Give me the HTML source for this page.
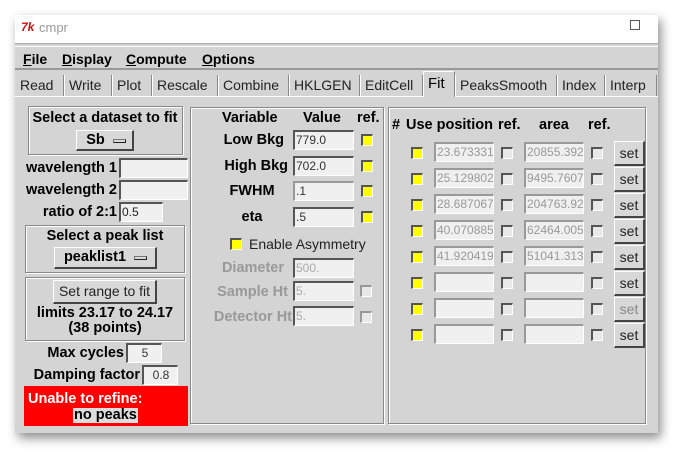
<!DOCTYPE html>
<html><head><meta charset="utf-8"><style>
*{box-sizing:border-box;margin:0;padding:0}
body{width:695px;height:470px;background:#fff;position:relative;overflow:hidden;font-family:"Liberation Sans",sans-serif;font-size:13px;color:#000}
.a{position:absolute}
.win{left:15px;top:15px;width:643px;height:418px;background:#d4d4d4;box-shadow:3px 5px 10px rgba(0,0,0,.45)}
.b{font-weight:bold}
.ent{position:absolute;background:#f0f0f0;border-top:2px solid #555;border-left:2px solid #555;border-right:1px solid #fff;border-bottom:1px solid #fff;height:20px;font-size:12px;color:#555;padding-left:1px;line-height:17px;overflow:hidden;white-space:nowrap}
.ent.g{border-top-color:#999;border-left-color:#999}
.cb{position:absolute;width:12px;height:12px;background:#ffff00;border-top:2px solid #555;border-left:2px solid #555;border-right:1px solid #fff;border-bottom:1px solid #fff}
.cw{position:absolute;width:12px;height:12px;background:#e8e8e8;border-top:2px solid #555;border-left:2px solid #555;border-right:1px solid #fff;border-bottom:1px solid #fff}
.grp{position:absolute;border:1px solid #888;box-shadow:inset 1px 1px 0 #fff,1px 1px 0 #fff}
.btn{position:absolute;background:#d8d8d8;border-top:1px solid #fff;border-left:1px solid #fff;border-right:2px solid #444;border-bottom:2px solid #444;text-align:center}
.tab{position:absolute;top:75px;height:21px;border-left:1px solid #fff;border-right:1px solid #888;font-size:14px;line-height:20px;padding-left:4px;color:#222}
.r{text-align:right}
.gr{color:#999}
.L{font-size:14.5px}
</style></head><body>
<div class="a win"></div>
<div class="a" style="left:15px;top:15px;width:643px;height:29px;background:#fff;border-bottom:1px solid #aaa"></div>
<div class="a" style="left:21px;top:20px;color:#d01010;font-weight:bold;font-style:italic;font-size:12px">7k</div>
<div class="a" style="left:39px;top:20px;color:#999;font-size:13px">cmpr</div>
<div class="a" style="left:630px;top:20px;width:10px;height:10px;border:1px solid #555"></div>
<div class="a" style="left:15px;top:46px;width:643px;height:24px;border-bottom:2px solid #999;box-shadow:inset 0 1px 0 #fff"></div>
<div class="a b" style="left:23px;top:51px;font-size:14px"><u>F</u>ile</div>
<div class="a b" style="left:62px;top:51px;font-size:14px"><u>D</u>isplay</div>
<div class="a b" style="left:126px;top:51px;font-size:14px"><u>C</u>ompute</div>
<div class="a b" style="left:202px;top:51px;font-size:14px"><u>O</u>ptions</div>
<div class="tab" style="left:16px;width:48px;border-left:none">Read</div>
<div class="tab" style="left:64px;width:48px">Write</div>
<div class="tab" style="left:112px;width:40px">Plot</div>
<div class="tab" style="left:152px;width:66px">Rescale</div>
<div class="tab" style="left:218px;width:71px">Combine</div>
<div class="tab" style="left:289px;width:71px">HKLGEN</div>
<div class="tab" style="left:360px;width:63px">EditCell</div>
<div class="tab" style="left:423px;top:71px;height:26px;width:32px;background:#d4d4d4;line-height:24px;color:#000;border-top:1px solid #fff;font-size:15px">Fit</div>
<div class="tab" style="left:455px;width:102px">PeaksSmooth</div>
<div class="tab" style="left:557px;width:48px">Index</div>
<div class="tab" style="left:605px;width:52px">Interp</div>
<div class="a" style="left:15px;top:96px;width:408px;height:1px;background:#fff"></div>
<div class="a" style="left:455px;top:96px;width:203px;height:1px;background:#fff"></div>

<!-- left -->
<div class="grp" style="left:28px;top:106px;width:155px;height:49px"></div>
<div class="a b L" style="left:20px;top:110px;width:170px;text-align:center">Select a dataset to fit</div>
<div class="btn b L" style="left:76px;top:130px;width:58px;height:21px;line-height:18px;padding-right:18px">Sb<span class="a" style="right:6px;top:8px;width:13px;height:4px;border:1px solid #777;border-bottom-color:#222;border-right-color:#222"></span></div>
<div class="a b r L" style="left:10px;top:160px;width:107px">wavelength 1</div>
<div class="ent" style="left:119px;top:158px;width:69px"></div>
<div class="a b r L" style="left:10px;top:182px;width:107px">wavelength 2</div>
<div class="ent" style="left:119px;top:180px;width:69px"></div>
<div class="a b r L" style="left:10px;top:204px;width:107px">ratio of 2:1</div>
<div class="ent" style="left:119px;top:202px;width:44px;color:#222">0.5</div>
<div class="grp" style="left:25px;top:225px;width:160px;height:48px"></div>
<div class="a b L" style="left:25px;top:228px;width:160px;text-align:center">Select a peak list</div>
<div class="btn b L" style="left:54px;top:247px;width:103px;height:22px;line-height:19px;padding-right:20px">peaklist1<span class="a" style="right:8px;top:8px;width:13px;height:4px;border:1px solid #777;border-bottom-color:#222;border-right-color:#222"></span></div>
<div class="grp" style="left:25px;top:277px;width:160px;height:64px"></div>
<div class="btn" style="left:53px;top:280px;width:104px;height:24px;line-height:21px;font-size:14px;color:#222">Set range to fit</div>
<div class="a b L" style="left:25px;top:306px;width:160px;text-align:center;line-height:15px">limits 23.17 to 24.17<br>(38 points)</div>
<div class="a b r L" style="left:20px;top:345px;width:104px">Max cycles</div>
<div class="ent" style="left:126px;top:343px;width:36px;text-align:center;color:#333">5</div>
<div class="a b r L" style="left:20px;top:367px;width:120px">Damping factor</div>
<div class="ent" style="left:142px;top:365px;width:36px;text-align:center;color:#333">0.8</div>
<div class="a" style="left:24px;top:386px;width:164px;height:40px;background:#ff0000"></div>
<div class="a b L" style="left:28px;top:391px;color:#fff">Unable to refine:</div>
<div class="a b L" style="left:73px;top:408px;background:#ddd;line-height:15px;padding:0 1px">no peaks</div>

<!-- middle -->
<div class="grp" style="left:190px;top:107px;width:194px;height:317px"></div>
<div class="a b L" style="left:222px;top:110px">Variable</div>
<div class="a b L" style="left:303px;top:110px">Value</div>
<div class="a b L" style="left:357px;top:110px">ref.</div>
<div class="a b r L" style="left:190px;top:132px;width:94px">Low Bkg</div>
<div class="ent" style="left:293px;top:130px;width:61px;color:#333">779.0</div><div class="cb" style="left:361px;top:134px"></div>
<div class="a b r L" style="left:190px;top:158px;width:98px">High Bkg</div>
<div class="ent" style="left:293px;top:156px;width:61px;color:#333">702.0</div><div class="cb" style="left:361px;top:160px"></div>
<div class="a b L" style="left:222px;top:183px;width:60px;text-align:center">FWHM</div>
<div class="ent g" style="left:293px;top:181px;width:61px;color:#333">.1</div><div class="cb" style="left:361px;top:185px"></div>
<div class="a b L" style="left:222px;top:209px;width:60px;text-align:center">eta</div>
<div class="ent" style="left:293px;top:207px;width:61px;color:#333">.5</div><div class="cb" style="left:361px;top:211px"></div>
<div class="cb" style="left:230px;top:238px"></div>
<div class="a" style="left:249px;top:236px;font-size:14px;color:#222">Enable Asymmetry</div>
<div class="a b r gr L" style="left:190px;top:260px;width:94px">Diameter</div>
<div class="ent" style="left:293px;top:258px;width:61px;color:#aaa">500.</div>
<div class="a b r gr L" style="left:190px;top:284px;width:98px">Sample Ht</div>
<div class="ent" style="left:293px;top:281px;width:61px;color:#aaa">5.</div><div class="cw" style="left:360px;top:285px;border-color:#999 #fff #fff #999"></div>
<div class="a b r gr L" style="left:190px;top:309px;width:102px">Detector Ht</div>
<div class="ent" style="left:293px;top:306px;width:61px;color:#aaa">5.</div><div class="cw" style="left:360px;top:311px;border-color:#999 #fff #fff #999"></div>

<!-- right -->
<div class="grp" style="left:388px;top:107px;width:258px;height:317px"></div>
<div class="a b L" style="left:392px;top:117px">#</div>
<div class="a b L" style="left:406px;top:117px">Use position</div>
<div class="a b L" style="left:498px;top:117px">ref.</div>
<div class="a b L" style="left:539px;top:117px">area</div>
<div class="a b L" style="left:588px;top:117px">ref.</div>
<div id="rows"></div>
<script>
var v=[["23.673331","20855.392"],["25.129802","9495.7607"],["28.687067","204763.92"],["40.070885","62464.005"],["41.920419","51041.313"],["",""],["",""],["",""]];
var h="";
for(var i=0;i<8;i++){var y=142+i*26;
h+='<div class="cb" style="left:411px;top:'+(y+5)+'px"></div>';
h+='<div class="ent g" style="left:434px;top:'+y+'px;width:60px;color:#999">'+v[i][0]+'</div>';
h+='<div class="cw" style="left:501px;top:'+(y+5)+'px"></div>';
h+='<div class="ent g" style="left:524px;top:'+y+'px;width:60px;color:#999">'+v[i][1]+'</div>';
h+='<div class="cw" style="left:591px;top:'+(y+5)+'px"></div>';
h+='<div class="btn" style="left:614px;top:'+(y-1)+'px;width:31px;height:25px;line-height:22px;font-size:14px;color:'+(i==6?'#888':'#222')+'">set</div>';}
document.getElementById("rows").innerHTML=h;
</script>
</body></html>
